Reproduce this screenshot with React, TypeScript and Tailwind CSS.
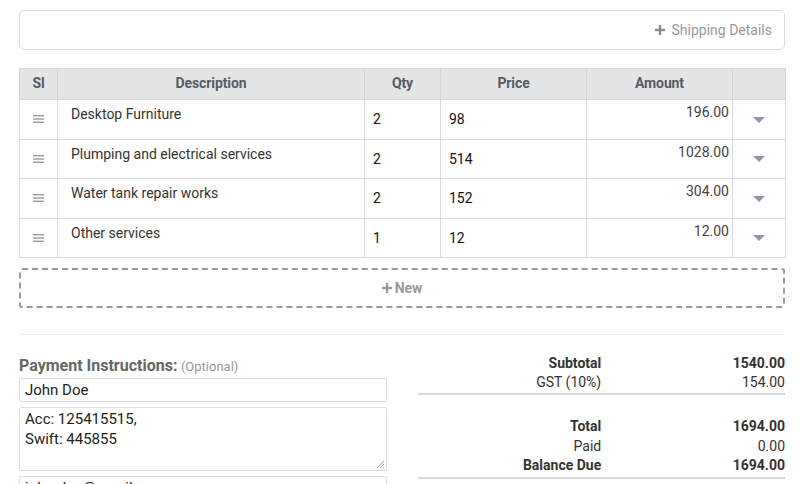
import React from "react";

const rows = [
  { d: "Desktop Furniture", q: "2", p: "98", a: "196.00" },
  { d: "Plumping and electrical services", q: "2", p: "514", a: "1028.00" },
  { d: "Water tank repair works", q: "2", p: "152", a: "304.00" },
  { d: "Other services", q: "1", p: "12", a: "12.00" },
];

function Bars() {
  return (
    <svg width="12" height="10" viewBox="0 0 12 10" className="block mx-auto">
      <rect x="0" y="1" width="11" height="1.4" fill="#9a9a9a" />
      <rect x="0" y="4.3" width="11" height="1.4" fill="#9a9a9a" />
      <rect x="0" y="7.6" width="11" height="1.4" fill="#9a9a9a" />
    </svg>
  );
}

function Caret() {
  return (
    <svg width="12" height="7" viewBox="0 0 12 7" className="block mx-auto">
      <path d="M0 0 L12 0 L6 6 Z" fill="#8e99ad" />
    </svg>
  );
}

function Plus({ size = 10, color = "#888" }: { size?: number; color?: string }) {
  return (
    <svg width={size} height={size} viewBox="0 0 10 10" className="inline-block">
      <rect x="3.8" y="0" width="2.4" height="10" fill={color} />
      <rect x="0" y="3.8" width="10" height="2.4" fill={color} />
    </svg>
  );
}

export default function App() {
  return (
    <div
      className="w-[800px] h-[484px] overflow-hidden bg-white pl-[19px] pr-[15px] pt-[10px] text-[14px] text-[#333]"
      style={{ fontFamily: "Roboto, 'Noto Sans', sans-serif" }}
    >
      <div className="h-[40px] border border-[#dcdcdc] rounded-[5px] flex items-center justify-end pr-[12px] text-[#999]">
        <span className="flex items-center gap-[7px]">
          <Plus size={10} color="#8a8a8a" />
          <span>Shipping Details</span>
        </span>
      </div>

      <table className="mt-[18px] w-[766px] border-collapse table-fixed">
        <colgroup>
          <col className="w-[38px]" />
          <col className="w-[307px]" />
          <col className="w-[76px]" />
          <col className="w-[146px]" />
          <col className="w-[146px]" />
          <col className="w-[53px]" />
        </colgroup>
        <thead>
          <tr className="h-[31px] bg-[#e4e5e7] text-[#555b63] font-bold tracking-[-0.1px]">
            <th className="border border-[#d6d6d6] font-bold pb-[1px]">Sl</th>
            <th className="border border-[#d6d6d6] font-bold pb-[1px]">Description</th>
            <th className="border border-[#d6d6d6] font-bold pb-[1px]">Qty</th>
            <th className="border border-[#d6d6d6] font-bold pb-[1px]">Price</th>
            <th className="border border-[#d6d6d6] font-bold pb-[1px]">Amount</th>
            <th className="border border-[#d6d6d6]"></th>
          </tr>
        </thead>
        <tbody>
          {rows.map((r, i) => (
            <tr key={i} className="h-[39.5px]">
              <td className="border border-[#dadada] align-middle">
                <Bars />
              </td>
              <td className="border border-[#dadada] align-top pl-[13px] pt-[4px] text-[#333]">
                {r.d}
              </td>
              <td className="border border-[#dadada] align-top pl-[8px] pt-[9px] text-[#111]">
                {r.q}
              </td>
              <td className="border border-[#dadada] align-top pl-[8px] pt-[9px] text-[#111]">
                {r.p}
              </td>
              <td className="border border-[#dadada] align-top text-right pr-[3px] pt-[2px] text-[#444]">
                {r.a}
              </td>
              <td className="border border-[#dadada] align-middle pt-[2px]">
                <Caret />
              </td>
            </tr>
          ))}
        </tbody>
      </table>

      <div className="mt-[10px] h-[40px] border-2 border-dashed border-[#999] rounded-[3px] flex items-center justify-center text-[#999] font-bold">
        <span className="flex items-center gap-[3px]">
          <Plus size={10} color="#999" />
          <span>New</span>
        </span>
      </div>

      <div className="mt-[26px] border-t border-[#ececec]" />

      <div className="grid grid-cols-2 gap-[31px] pt-[18px]">
        <div>
          <div className="mt-[3px] leading-[20px]">
            <span className="text-[16px] font-bold text-[#666]">Payment Instructions:</span>{" "}
            <span className="text-[13px] text-[#999]">(Optional)</span>
          </div>
          <div className="mt-[1px] h-[24px] border border-[#ddd] rounded-[2px] px-[5px] text-[15px] text-[#222] leading-[22px]">
            John Doe
          </div>
          <div className="relative mt-[5px] h-[64px] border border-[#ddd] rounded-[2px] px-[5px] pt-[1px] text-[15px] text-[#222] leading-[20px]">
            <div>Acc: 125415515,</div>
            <div>Swift: 445855</div>
            <svg width="9" height="9" viewBox="0 0 9 9" className="absolute right-[1px] bottom-[1px]">
              <path d="M8 1 L1 8 M8 4 L4 8 M8 7 L7 8" stroke="#888" strokeWidth="0.8" />
            </svg>
          </div>
          <div className="mt-[5px] h-[24px] border border-[#ddd] rounded-[2px] px-[5px] text-[15px] text-[#222] leading-[22px]">
            john.doe@email.com
          </div>
        </div>
        <div className="text-[#333] pt-[1px]">
          <div className="grid grid-cols-2 leading-[19px]">
            <div className="text-right font-bold">Subtotal</div>
            <div className="text-right font-bold">1540.00</div>
            <div className="text-right">GST (10%)</div>
            <div className="text-right">154.00</div>
          </div>
          <div className="mt-[1px] h-[2px] bg-[#d9d9d9]" />
          <div className="grid grid-cols-2 leading-[19.5px] mt-[22px]">
            <div className="text-right font-bold">Total</div>
            <div className="text-right font-bold">1694.00</div>
            <div className="text-right">Paid</div>
            <div className="text-right">0.00</div>
            <div className="text-right font-bold">Balance Due</div>
            <div className="text-right font-bold">1694.00</div>
          </div>
          <div className="mt-[1px] h-[2px] bg-[#d9d9d9]" />
        </div>
      </div>
    </div>
  );
}
